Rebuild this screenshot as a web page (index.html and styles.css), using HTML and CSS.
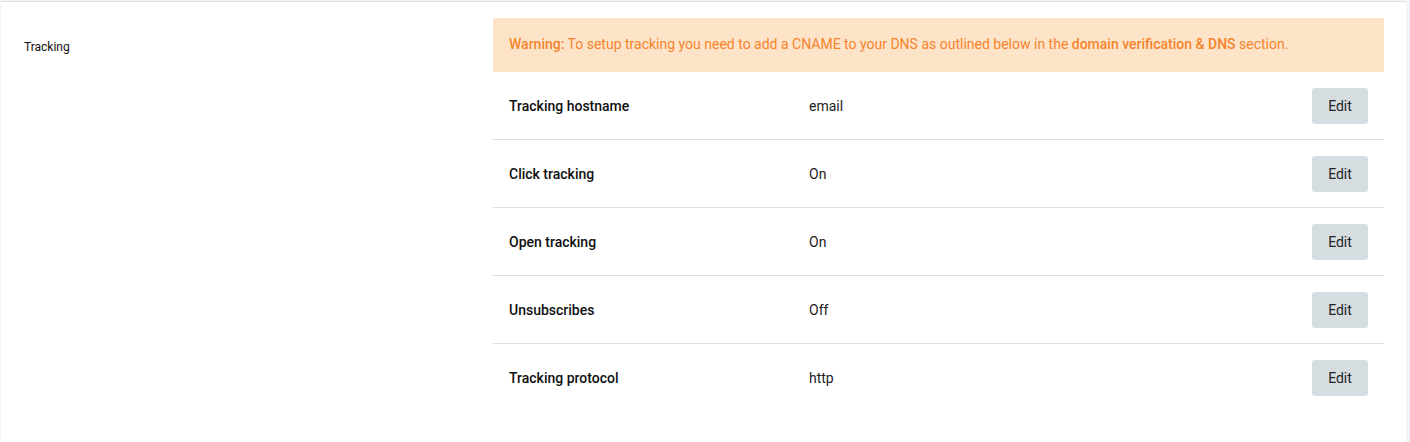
FILE: index.html
```html
<!DOCTYPE html>
<html>
<head>
<meta charset="utf-8">
<link rel="stylesheet" href="styles.css">
</head>
<body>
<div class="card">
  <div class="side">Tracking</div>
  <div class="main">
    <div class="warning"><b>Warning:</b> To setup tracking you need to add a CNAME to your DNS as outlined below in the <b>domain verification &amp; DNS</b> section.</div>
    <div class="row"><div class="label">Tracking hostname</div><div class="value">email</div><button class="edit">Edit</button></div>
    <div class="row"><div class="label">Click tracking</div><div class="value">On</div><button class="edit">Edit</button></div>
    <div class="row"><div class="label">Open tracking</div><div class="value">On</div><button class="edit">Edit</button></div>
    <div class="row"><div class="label">Unsubscribes</div><div class="value">Off</div><button class="edit">Edit</button></div>
    <div class="row last"><div class="label">Tracking protocol</div><div class="value">http</div><button class="edit">Edit</button></div>
  </div>
</div>
</body>
</html>
```
FILE: styles.css
```css
html, body {
  margin: 0;
  padding: 0;
  background: #f1f5f9;
  font-family: Roboto, "Liberation Sans", sans-serif;
  color: #1d1d1d;
}
body {
  padding-top: 1px;
  height: 441px;
}
.card {
  margin-left: 1px;
  width: 1405px;
  height: 441px;
  box-sizing: border-box;
  background: #fff;
  border-top: 1px solid #e2e2e2;
  display: flex;
  padding: 16px 22px 0 0;
}
.side {
  width: 492px;
  box-sizing: border-box;
  padding: 21px 0 0 23px;
  font-size: 12px;
  line-height: 16px;
  color: #111;
}
.main {
  width: 891px;
}
.warning {
  background: #fde4c9;
  color: #f5842c;
  font-size: 14px;
  height: 54px;
  box-sizing: border-box;
  padding: 18px 16px 0 16px;
  line-height: 16px;
}
.warning b {
  font-weight: 500;
}
.row {
  display: flex;
  align-items: center;
  height: 68px;
  box-sizing: border-box;
  border-bottom: 1px solid #e0e0e0;
  padding: 0 16px 0 16px;
  font-size: 14px;
}
.row.last {
  border-bottom: none;
}
.label {
  width: 300px;
  font-weight: 500;
  color: #111;
}
.value {
  flex: 1;
  color: #1d1d1d;
}
.edit {
  width: 56px;
  height: 36px;
  border: none;
  border-radius: 3px;
  background: #d6dde0;
  color: #222;
  font-family: Roboto, "Liberation Sans", sans-serif;
  font-size: 14px;
  padding: 0;
}
```
